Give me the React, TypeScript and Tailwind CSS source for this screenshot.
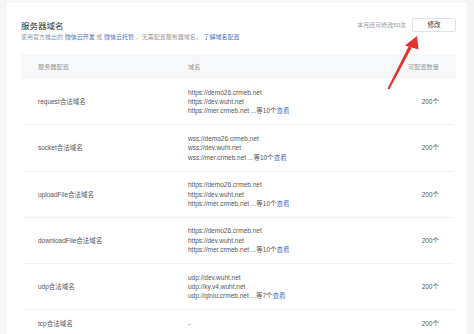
import React from 'react';

type DomainRow = {
  name: string;
  domains: string[];
  more?: string;
  count: string;
};

const rows: DomainRow[] = [
  {
    name: 'request合法域名',
    domains: ['https://demo26.crmeb.net', 'https://dev.wuht.net', 'https://mer.crmeb.net'],
    more: '等10个',
    count: '200个',
  },
  {
    name: 'socket合法域名',
    domains: ['wss://demo26.crmeb.net', 'wss://dev.wuht.net', 'wss://mer.crmeb.net'],
    more: '等10个',
    count: '200个',
  },
  {
    name: 'uploadFile合法域名',
    domains: ['https://demo26.crmeb.net', 'https://dev.wuht.net', 'https://mer.crmeb.net'],
    more: '等10个',
    count: '200个',
  },
  {
    name: 'downloadFile合法域名',
    domains: ['https://demo26.crmeb.net', 'https://dev.wuht.net', 'https://mer.crmeb.net'],
    more: '等10个',
    count: '200个',
  },
  {
    name: 'udp合法域名',
    domains: ['udp://dev.wuht.net', 'udp://ky.v4.wuht.net', 'udp://qiniu.crmeb.net'],
    more: '等7个',
    count: '200个',
  },
  {
    name: 'tcp合法域名',
    domains: ['-'],
    count: '200个',
  },
];

function ArrowMark() {
  return (
    <svg
      className="pointer-events-none absolute left-[380px] top-[30px]"
      width="50"
      height="64"
      viewBox="0 0 50 64"
    >
      <path d="M7.5 58.5 L28.6 16.4 L31.6 17.8 L9.3 59.4 Z" fill="#e5322a" />
      <path d="M37 6 L25 15.5 L38.5 19.5 Z" fill="#e5322a" />
    </svg>
  );
}

function TableRow({ row }: { row: DomainRow }) {
  return (
    <div className="mx-[2px] grid grid-cols-[150px_1fr_auto] items-center border-b border-[#f0f0f2] px-[15px] py-[8.7px] text-[6.5px] leading-[9.3px] text-[#555]">
      <div>{row.name}</div>
      <div className="flex flex-col justify-center">
        {row.domains.map((d, i) => (
          <div key={d}>
            {d}
            {row.more && i === row.domains.length - 1 && (
              <span>
                {' '}...{row.more}
                <span className="text-[#4a6fc7]">查看</span>
              </span>
            )}
          </div>
        ))}
      </div>
      <div className="text-right">{row.count}</div>
    </div>
  );
}

export default function App() {
  return (
    <div
      className="relative h-[334px] w-[474px] overflow-hidden bg-[#f4f5f7] px-[7px] pt-[3px]"
      style={{ fontFamily: '"Liberation Sans", "Noto Sans CJK SC", sans-serif' }}
    >
      <div className="h-[400px] w-[460px] bg-white pl-[14px] pr-[11px] pt-[15px]">
        <div className="flex items-start justify-between">
          <div>
            <div className="text-[8.5px] leading-[16px] text-[#2b2b2b]">服务器域名</div>
            <div className="-mt-[1px] text-[6px] leading-[8px] text-[#999]">
              使用官方推出的 <span className="text-[#4a6fc7]">微信云开发</span> 或{' '}
              <span className="text-[#4a6fc7]">微信云托管</span> ，无需配置服务器域名，{' '}
              <span className="text-[#4a6fc7]">了解域名配置</span>
            </div>
          </div>
          <div className="flex items-center gap-[6px]">
            <span className="text-[6px] text-[#999]">本月还可修改50次</span>
            <button
              type="button"
              className="flex h-[14px] w-[44px] items-center justify-center rounded-[2px] border border-[#e2e3e6] bg-white text-[6.5px] text-[#333]"
            >
              修改
            </button>
          </div>
        </div>

        <div className="mt-[13px]">
          <div className="grid h-[25px] grid-cols-[150px_1fr_auto] items-center bg-[#f7f8fa] px-[17px] text-[6.2px] text-[#999]">
            <div>服务器配置</div>
            <div>域名</div>
            <div className="text-right">可配置数量</div>
          </div>
          {rows.map((r) => (
            <TableRow key={r.name} row={r} />
          ))}
        </div>
      </div>
      <ArrowMark />
    </div>
  );
}
